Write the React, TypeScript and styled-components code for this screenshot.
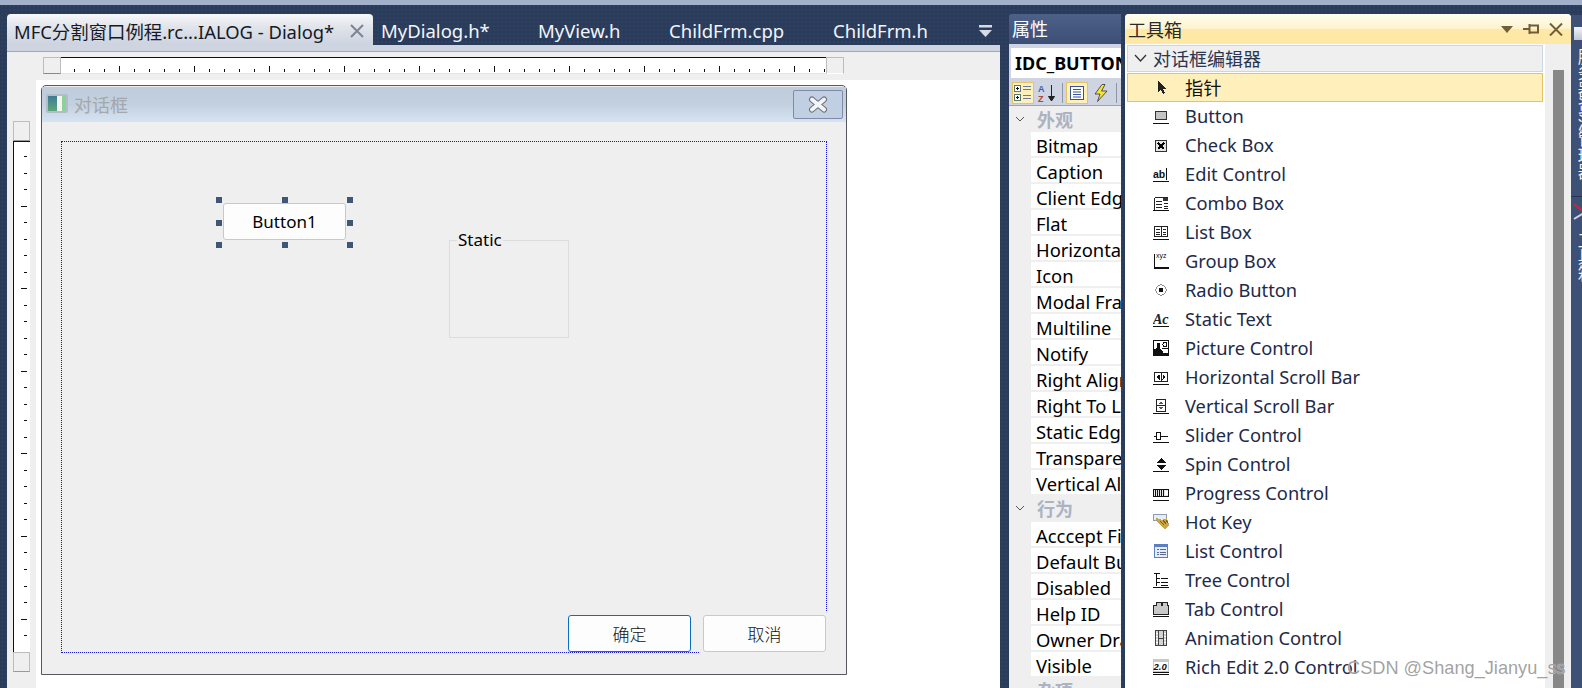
import React from 'react';
import styled, { createGlobalStyle } from 'styled-components';

const UI_FONT = '"Noto Sans", "Noto Sans CJK SC", sans-serif';

const GlobalStyle = createGlobalStyle`
  html, body {
    margin: 0;
    padding: 0;
    background: #2b3c5b;
  }
  * {
    box-sizing: border-box;
  }
`;

const tabs = [
  { label: 'MyDialog.h*', width: 157 },
  { label: 'MyView.h', width: 131 },
  { label: 'ChildFrm.cpp', width: 164 },
  { label: 'ChildFrm.h', width: 140 },
];

type PropRow = { header?: boolean; label: string };

const propRows: PropRow[] = [
  { header: true, label: '外观' },
  { label: 'Bitmap' },
  { label: 'Caption' },
  { label: 'Client Edge' },
  { label: 'Flat' },
  { label: 'Horizontal Alignment' },
  { label: 'Icon' },
  { label: 'Modal Frame' },
  { label: 'Multiline' },
  { label: 'Notify' },
  { label: 'Right Align Text' },
  { label: 'Right To Left Reading' },
  { label: 'Static Edge' },
  { label: 'Transparent' },
  { label: 'Vertical Alignment' },
  { header: true, label: '行为' },
  { label: 'Acccept Files' },
  { label: 'Default Button' },
  { label: 'Disabled' },
  { label: 'Help ID' },
  { label: 'Owner Draw' },
  { label: 'Visible' },
  { header: true, label: '杂项' },
];

const Line = () => <path d="M0 15.5H16" stroke="#111" fill="none" />;

const toolIcons: Record<string, React.ReactNode> = {
  pointer: <polygon points="5,1 5,13 8,10.5 10,15 12,14 10,9.5 13,9.5" fill="#222" />,
  button: (
    <>
      <rect x="2.5" y="3.5" width="11" height="8" fill="#c4c4c4" stroke="#333" />
      <Line />
    </>
  ),
  check: (
    <>
      <rect x="2.5" y="3.5" width="11" height="11" fill="#e4e4e4" stroke="#333" />
      <path d="M5 6l6 6M11 6l-6 6" stroke="#000" strokeWidth="2" />
    </>
  ),
  edit: (
    <>
      <text x="0" y="12" fontFamily="Liberation Sans" fontSize="10.5" fontWeight="700" fill="#111">ab</text>
      <path d="M13.5 2V14" stroke="#111" />
      <Line />
    </>
  ),
  combo: (
    <>
      <path d="M1.5 2.5H14.5M1.5 2.5V15M3 6.5H9M3 9.5H9M3 12.5H9" stroke="#222" fill="none" />
      <rect x="10" y="3" width="5" height="3" fill="#333" />
      <path d="M10.5 8.5H15M10.5 11.5H15M10.5 13.5H15" stroke="#222" />
      <Line />
    </>
  ),
  listbox: (
    <>
      <rect x="1.5" y="2.5" width="13" height="10" fill="none" stroke="#222" />
      <path d="M8 3V12M3 5.5H6.5M3 8.5H6.5M3 10.5H6.5M9.5 5.5H13M9.5 8.5H13M9.5 10.5H13" stroke="#222" />
      <Line />
    </>
  ),
  group: (
    <>
      <path d="M1.5 1V15" stroke="#111" fill="none" />
      <rect x="1" y="14" width="15" height="2" fill="#111" />
      <text x="3" y="5" fontFamily="Liberation Sans" fontSize="7" fill="#111">xyz</text>
    </>
  ),
  radio: (
    <>
      <circle cx="8" cy="8" r="5.2" fill="#fff" stroke="#8e8e8e" />
      <circle cx="8" cy="8" r="2.4" fill="#111" />
    </>
  ),
  statictext: (
    <>
      <text x="0" y="13" fontFamily="Liberation Serif" fontSize="14" fontStyle="italic" fontWeight="700" fill="#222">Ac</text>
      <Line />
    </>
  ),
  picture: (
    <>
      <rect x="0.5" y="0.5" width="15" height="15" fill="#fff" stroke="#111" />
      <path d="M1 15V9L4 8V3H7V9L10 11V13H15V15Z" fill="#111" />
      <circle cx="12" cy="4.5" r="2" fill="none" stroke="#111" />
      <path d="M9 8.5H15" stroke="#111" />
    </>
  ),
  hscroll: (
    <>
      <rect x="1.5" y="3.5" width="13" height="9" fill="none" stroke="#222" />
      <path d="M8 4V12" stroke="#222" />
      <path d="M6.5 5.5V10.5L3.5 8ZM9.5 5.5V10.5L12.5 8Z" fill="#111" />
      <Line />
    </>
  ),
  vscroll: (
    <>
      <rect x="3.5" y="1.5" width="9" height="12" fill="none" stroke="#222" />
      <path d="M4 7.5H12" stroke="#222" />
      <path d="M5.5 6L8 3L10.5 6ZM5.5 9L8 12L10.5 9Z" fill="#555" />
      <Line />
    </>
  ),
  slider: (
    <>
      <path d="M1 9.5H15" stroke="#111" strokeWidth="1.2" />
      <rect x="3.5" y="5.5" width="4" height="7" fill="#fff" stroke="#111" />
      <Line />
    </>
  ),
  spin: (
    <>
      <path d="M3 7L8 2L13 7ZM3 9L8 14L13 9Z" fill="#111" />
      <Line />
    </>
  ),
  progress: (
    <>
      <rect x="0.5" y="4.5" width="15" height="7" fill="#e6e6e6" stroke="#111" />
      <path d="M2 5V11M4 5V11M6 5V11M8 5V11M10 5V11" stroke="#111" strokeWidth="1" />
      <rect x="12" y="6" width="3" height="4" fill="#fff" />
      <Line />
    </>
  ),
  hotkey: (
    <>
      <rect x="0.5" y="0.5" width="13" height="6" fill="#e8edf5" stroke="#8d9bb5" />
      <path d="M3 4L9 6L14 4L16 11L12 15L8 12L4 8Z" fill="#c9a544" />
      <path d="M7 7L11 11M10 6L13 10M13 6L15 9" stroke="#7b6220" fill="none" />
    </>
  ),
  listctrl: (
    <>
      <rect x="1.5" y="1.5" width="13" height="13" fill="#e3ecf8" stroke="#5b7fc0" />
      <rect x="2" y="2" width="12" height="2" fill="#5b7fc0" />
      <path d="M4 6.5H5.5M7 6.5H13M4 9.5H5.5M7 9.5H13M4 11.5H5.5M7 11.5H13" stroke="#5a6a90" />
    </>
  ),
  tree: (
    <>
      <path d="M1 1.5H7M3.5 1.5V14" stroke="#111" fill="none" />
      <path d="M4 6.5H7M4 10.5H7" stroke="#111" />
      <path d="M8 6.5H15M8 10.5H15M8 13.5H15" stroke="#111" />
      <Line />
    </>
  ),
  tab: (
    <>
      <path d="M0.5 4.5H3.5V1.5H8.5V4.5H9.5V1.5H14.5V4.5H15.5V13.5H0.5Z" fill="#c8c8c8" stroke="#222" />
      <Line />
    </>
  ),
  animation: (
    <>
      <rect x="2.5" y="0.5" width="11" height="15" fill="#d4d4d4" stroke="#444" />
      <path d="M5.5 1V15M10.5 1V15M5.5 8.5H10.5" stroke="#444" />
      <path d="M3 3.5H5M3 6.5H5M3 9.5H5M3 12.5H5M11 3.5H13M11 6.5H13M11 9.5H13M11 12.5H13" stroke="#fff" />
    </>
  ),
  richedit: (
    <>
      <rect x="0" y="0" width="16" height="13" fill="#c8c8c8" />
      <rect x="1" y="3" width="14" height="9" fill="#fff" />
      <text x="0.5" y="11" fontFamily="Liberation Sans" fontSize="9.5" fontStyle="italic" fontWeight="700" fill="#111">2.0</text>
      <path d="M0 13.5H16" stroke="#111" />
      <Line />
    </>
  ),
};

const tools = [
  { icon: 'pointer', label: '指针', active: true },
  { icon: 'button', label: 'Button' },
  { icon: 'check', label: 'Check Box' },
  { icon: 'edit', label: 'Edit Control' },
  { icon: 'combo', label: 'Combo Box' },
  { icon: 'listbox', label: 'List Box' },
  { icon: 'group', label: 'Group Box' },
  { icon: 'radio', label: 'Radio Button' },
  { icon: 'statictext', label: 'Static Text' },
  { icon: 'picture', label: 'Picture Control' },
  { icon: 'hscroll', label: 'Horizontal Scroll Bar' },
  { icon: 'vscroll', label: 'Vertical Scroll Bar' },
  { icon: 'slider', label: 'Slider Control' },
  { icon: 'spin', label: 'Spin Control' },
  { icon: 'progress', label: 'Progress Control' },
  { icon: 'hotkey', label: 'Hot Key' },
  { icon: 'listctrl', label: 'List Control' },
  { icon: 'tree', label: 'Tree Control' },
  { icon: 'tab', label: 'Tab Control' },
  { icon: 'animation', label: 'Animation Control' },
  { icon: 'richedit', label: 'Rich Edit 2.0 Control' },
];

function HRulerTicks() {
  const ticks = Array.from({ length: 51 }, (_, i) => i);
  return (
    <RulerSvg width={764} height={16}>
      {ticks.map((i) => {
        const x = 13 + 15 * i;
        const major = i % 5 === 3;
        return <rect key={i} x={x} y={major ? 8 : 11} width={1} height={major ? 6 : 3} fill="#111" />;
      })}
    </RulerSvg>
  );
}

function VRulerTicks() {
  const ticks = Array.from({ length: 31 }, (_, i) => i);
  return (
    <RulerSvg width={15} height={511}>
      {ticks.map((i) => {
        const y = Math.round(14 + 16.52 * i);
        const major = i % 5 === 3;
        return <rect key={i} x={major ? 7 : 10} y={y} width={major ? 6 : 3} height={1} fill="#111" />;
      })}
    </RulerSvg>
  );
}

function App() {
  return (
    <>
      <GlobalStyle />
      <Styled.Page>
        <Styled.TopBand />
        <Styled.Main>
          <Styled.Editor>
            <Styled.TabStrip>
              <Styled.ActiveTab>
                <span>MFC分割窗口例程.rc...IALOG - Dialog*</span>
                <svg width="14" height="14" viewBox="0 0 14 14">
                  <path d="M1 1L13 13M13 1L1 13" stroke="#7d8494" strokeWidth="2" />
                </svg>
              </Styled.ActiveTab>
              {tabs.map((t) => (
                <Styled.Tab key={t.label} $width={t.width}>
                  {t.label}
                </Styled.Tab>
              ))}
              <Styled.TabMenu>
                <svg width="14" height="13" viewBox="0 0 14 13">
                  <path d="M0 0H13V2.5H0Z" fill="#d5dae4" />
                  <path d="M0 5H13L6.5 12Z" fill="#d5dae4" />
                </svg>
              </Styled.TabMenu>
            </Styled.TabStrip>
            <Styled.TabRail />
            <Styled.RulerBand>
              <Styled.RulerCorner $flat />
              <Styled.HRuler>
                <HRulerTicks />
              </Styled.HRuler>
              <Styled.RulerCorner />
            </Styled.RulerBand>
            <Styled.Workspace>
              <Styled.Gutter>
                <Styled.VCorner />
                <Styled.VRuler>
                  <VRulerTicks />
                </Styled.VRuler>
                <Styled.VCorner />
              </Styled.Gutter>
              <Styled.Canvas>
                <Styled.Dialog>
                  <Styled.DialogTitle>
                    <Styled.DialogIcon />
                    <Styled.DialogName>对话框</Styled.DialogName>
                    <Styled.DialogClose>
                      <svg width="20" height="17" viewBox="0 0 20 17">
                        <path d="M4 3.5L16 13.5M16 3.5L4 13.5" stroke="#6b7180" strokeWidth="6" strokeLinecap="round" />
                        <path d="M4 3.5L16 13.5M16 3.5L4 13.5" stroke="#f3f4f6" strokeWidth="4" strokeLinecap="round" />
                      </svg>
                    </Styled.DialogClose>
                  </Styled.DialogTitle>
                  <Styled.DialogClient>
                    <Styled.Guide />
                    <Styled.Button1>Button1</Styled.Button1>
                    {[
                      [175, 111],
                      [241, 111],
                      [306, 111],
                      [175, 134],
                      [306, 134],
                      [175, 156],
                      [241, 156],
                      [306, 156],
                    ].map(([x, y]) => (
                      <Styled.Handle key={`${x}-${y}`} $x={x} $y={y} />
                    ))}
                    <Styled.GroupBox>
                      <Styled.GroupLabel>Static</Styled.GroupLabel>
                    </Styled.GroupBox>
                    <Styled.OkButton>确定</Styled.OkButton>
                    <Styled.CancelButton>取消</Styled.CancelButton>
                  </Styled.DialogClient>
                </Styled.Dialog>
              </Styled.Canvas>
            </Styled.Workspace>
          </Styled.Editor>

          <Styled.Properties>
            <Styled.PropsTitle>属性</Styled.PropsTitle>
            <Styled.ObjectBar>
              <Styled.ObjectName>IDC_BUTTON1</Styled.ObjectName>
            </Styled.ObjectBar>
            <Styled.PropsToolbar>
              <Styled.ToolToggle $on>
                <svg width="18" height="18" viewBox="0 0 18 18">
                  <rect x="0.5" y="1.5" width="6" height="6" fill="#fff" stroke="#5a7a70" />
                  <rect x="0.5" y="10.5" width="6" height="6" fill="#fff" stroke="#5a7a70" />
                  <path d="M2 4.5H5M3.5 3V6M2 13.5H5M3.5 12V15" stroke="#111" />
                  <path d="M9 2.5H17M9 5.5H17M9 11.5H17M9 14.5H17" stroke="#6a7a9a" />
                </svg>
              </Styled.ToolToggle>
              <Styled.ToolPlain>
                <svg width="18" height="20" viewBox="0 0 18 20">
                  <text x="0" y="9" fontFamily="Liberation Sans" fontSize="9" fontWeight="700" fill="#3a5fb0">A</text>
                  <text x="0" y="19" fontFamily="Liberation Sans" fontSize="9" fontWeight="700" fill="#b04040">Z</text>
                  <path d="M13.5 2V17M10.5 13.5L13.5 18L16.5 13.5Z" stroke="#222" fill="#222" />
                </svg>
              </Styled.ToolPlain>
              <Styled.ToolSep />
              <Styled.ToolToggle $on>
                <svg width="16" height="16" viewBox="0 0 16 16">
                  <rect x="1.5" y="1.5" width="13" height="13" fill="#fff" stroke="#34519a" />
                  <path d="M4 4.5H12M4 7H12M4 9.5H12M4 12H12" stroke="#34519a" />
                </svg>
              </Styled.ToolToggle>
              <Styled.ToolPlain>
                <svg width="14" height="18" viewBox="0 0 14 18">
                  <path d="M8 0.5L1 10H6L3.5 17.5L13 7H7.5L11 0.5Z" fill="#f6e33a" stroke="#333" strokeWidth="0.8" />
                </svg>
              </Styled.ToolPlain>
              <Styled.ToolSep />
            </Styled.PropsToolbar>
            <Styled.PropsList>
              {propRows.map((row) =>
                row.header ? (
                  <Styled.PropHeader key={row.label}>
                    <svg width="10" height="6" viewBox="0 0 10 6">
                      <path d="M1 1L5 5L9 1" fill="none" stroke="#555" />
                    </svg>
                    <span>{row.label}</span>
                  </Styled.PropHeader>
                ) : (
                  <Styled.PropRow key={row.label}>{row.label}</Styled.PropRow>
                ),
              )}
            </Styled.PropsList>
          </Styled.Properties>

          <Styled.Toolbox>
            <Styled.ToolboxTitle>
              <span>工具箱</span>
              <Styled.TitleButtons>
                <svg width="12" height="7" viewBox="0 0 12 7">
                  <path d="M0 0H12L6 7Z" fill="#6f5f38" />
                </svg>
                <svg width="16" height="12" viewBox="0 0 16 12">
                  <path d="M0 6H6M6.5 1V11M6.5 2.5H15V9.5H6.5" fill="none" stroke="#6f5f38" strokeWidth="2" />
                </svg>
                <svg width="14" height="13" viewBox="0 0 14 13">
                  <path d="M1 0.5L13 12.5M13 0.5L1 12.5" stroke="#6f5f38" strokeWidth="2" />
                </svg>
              </Styled.TitleButtons>
            </Styled.ToolboxTitle>
            <Styled.ToolboxBody>
              <Styled.ToolList>
                <Styled.ToolGroup>
                  <svg width="13" height="8" viewBox="0 0 13 8">
                    <path d="M1 1L6.5 7L12 1" fill="none" stroke="#333" strokeWidth="1.3" />
                  </svg>
                  <span>对话框编辑器</span>
                </Styled.ToolGroup>
                {tools.map((t) => (
                  <Styled.ToolRow key={t.label} $active={t.active}>
                    <Styled.ToolIcon viewBox="0 0 16 16" width={16} height={16}>
                      {toolIcons[t.icon]}
                    </Styled.ToolIcon>
                    <span>{t.label}</span>
                  </Styled.ToolRow>
                ))}
              </Styled.ToolList>
              <Styled.ScrollTrack>
                <Styled.ScrollThumb />
              </Styled.ScrollTrack>
            </Styled.ToolboxBody>
          </Styled.Toolbox>

          <Styled.SideStrip>
            <Styled.SideIcon />
            <Styled.SideLabel>服务器资源管理器</Styled.SideLabel>
            <Styled.SideDivider />
            <Styled.SideMark>
              <svg width="11" height="18" viewBox="0 0 11 18">
                <path d="M1 1L11 9" stroke="#c02a3a" strokeWidth="2" />
                <path d="M1 16L11 10" stroke="#cfd6e5" strokeWidth="2" />
              </svg>
            </Styled.SideMark>
            <Styled.SideLabel>工具箱</Styled.SideLabel>
          </Styled.SideStrip>
        </Styled.Main>
        <Styled.Watermark>CSDN @Shang_Jianyu_ss</Styled.Watermark>
      </Styled.Page>
    </>
  );
}

export default App;

const Page = styled.div`
  position: relative;
  width: 1582px;
  height: 688px;
  overflow: hidden;
  display: flex;
  flex-direction: column;
  font-family: ${UI_FONT};
  background-color: #2b3c5b;
  background-image: radial-gradient(#33476a 0.6px, transparent 0.8px);
  background-size: 4px 4px;
`;

const TopBand = styled.div`
  height: 5px;
  flex: none;
  background: #a2b1c9;
`;

const Main = styled.div`
  flex: 1;
  min-height: 0;
  display: flex;
  padding: 9px 0 0 7px;
`;

const Editor = styled.div`
  width: 993px;
  flex: none;
  display: flex;
  flex-direction: column;
`;

const TabStrip = styled.div`
  height: 31px;
  flex: none;
  display: flex;
`;

const ActiveTab = styled.div`
  width: 366px;
  flex: none;
  display: flex;
  align-items: center;
  justify-content: space-between;
  padding: 2px 9px 0 7px;
  border-radius: 4px 4px 0 0;
  background: linear-gradient(#f6f7f9, #dfe3ea 45%, #cdd3df);
  color: #141a28;
  font-size: 18.4px;
  white-space: nowrap;
`;

const Tab = styled.div<{ $width: number }>`
  width: ${({ $width }) => $width}px;
  flex: none;
  display: flex;
  align-items: center;
  padding: 2px 0 0 8px;
  color: #f2f5fa;
  font-size: 18.5px;
  white-space: nowrap;
`;

const TabMenu = styled.div`
  display: flex;
  align-items: center;
  margin-left: 14px;
  padding-top: 4px;
`;

const TabRail = styled.div`
  height: 7px;
  flex: none;
  background: #ced4e0;
  border-bottom: 1px solid #a5a8ae;
`;

const RulerBand = styled.div`
  height: 28px;
  flex: none;
  display: flex;
  align-items: flex-start;
  padding: 5px 0 0 36px;
  background: #efefef;
`;

const RulerCorner = styled.div<{ $flat?: boolean }>`
  width: 18px;
  height: 17px;
  flex: none;
  background: #efefef;
  border: 1px solid #bdbdbd;
  border-bottom-color: ${({ $flat }) => ($flat ? '#888' : '#fff')};
`;

const HRuler = styled.div`
  width: 765px;
  height: 17px;
  flex: none;
  background: #fff;
  border-top: 1px solid #111;
  border-bottom: 1px solid #e4e4e4;
  overflow: hidden;
`;

const RulerSvg = styled.svg`
  display: block;
`;

const Workspace = styled.div`
  flex: 1;
  min-height: 0;
  display: flex;
`;

const Gutter = styled.div`
  width: 29px;
  flex: none;
  display: flex;
  flex-direction: column;
  align-items: flex-start;
  padding: 41px 0 0 6px;
  background: #efefef;
`;

const VCorner = styled.div`
  width: 17px;
  height: 20px;
  flex: none;
  background: #efefef;
  border: 1px solid #bdbdbd;
  border-bottom-color: #999;
`;

const VRuler = styled.div`
  width: 17px;
  height: 511px;
  flex: none;
  background: #fff;
  border-left: 1px solid #111;
  border-top: 1px solid #111;
  overflow: hidden;
`;

const Canvas = styled.div`
  flex: 1;
  min-width: 0;
  padding: 5px 0 0 5px;
  background: #fff;
`;

const Dialog = styled.div`
  width: 806px;
  height: 590px;
  display: flex;
  flex-direction: column;
  background: #efefef;
  border: 1.5px solid #565a60;
  border-radius: 5px 5px 0 0;
`;

const DialogTitle = styled.div`
  height: 35px;
  flex: none;
  display: flex;
  align-items: center;
  padding: 0 3px 0 4px;
  margin-top: 1px;
  background: linear-gradient(#bfccdb, #c3d0df 50%, #d6e3f2);
`;

const DialogIcon = styled.div`
  width: 22px;
  height: 19px;
  flex: none;
  border: 2px solid #b4bcc8;
  border-radius: 2px;
  margin-bottom: 2px;
  background:
    linear-gradient(90deg, transparent 0 50%, #f4f4f4 50% 80%, #8fcf9a 80%),
    linear-gradient(#3e7a96, #5ea77c);
`;

const DialogName = styled.div`
  margin-left: 6px;
  color: #a4a7ab;
  font-size: 18px;
  line-height: 24px;
`;

const DialogClose = styled.div`
  width: 50px;
  height: 29px;
  margin-left: auto;
  display: flex;
  align-items: center;
  justify-content: center;
  background: #c0cfe1;
  border: 1px solid #7f8ba8;
  border-radius: 2px;
`;

const DialogClient = styled.div`
  position: relative;
  flex: 1;
`;

const Guide = styled.div`
  position: absolute;
  left: 19px;
  top: 19px;
  width: 766px;
  height: 512px;
  border: 1px dotted #1010e0;
`;

const Handle = styled.div<{ $x: number; $y: number }>`
  position: absolute;
  left: ${({ $x }) => $x - 1}px;
  top: ${({ $y }) => $y - 36}px;
  width: 6px;
  height: 6px;
  background: #3f5675;
`;

const dialogButton = `
  position: absolute;
  display: flex;
  align-items: center;
  justify-content: center;
  background: #fdfdfd;
  border-radius: 3px;
  color: #111;
`;

const Button1 = styled.div`
  ${dialogButton}
  left: 181px;
  top: 81px;
  width: 123px;
  height: 37px;
  border: 1px solid #c8c8c8;
  color: #000;
  font-size: 17px;
`;

const GroupBox = styled.div`
  position: absolute;
  left: 407px;
  top: 118px;
  width: 120px;
  height: 98px;
  border: 1px solid #dcdcdc;
`;

const GroupLabel = styled.div`
  position: absolute;
  left: 7px;
  top: -11px;
  padding: 0 1px;
  background: #efefef;
  color: #000;
  font-size: 17px;
  line-height: 20px;
`;

const OkButton = styled.div`
  ${dialogButton}
  left: 526px;
  top: 493px;
  width: 123px;
  height: 37px;
  border: 1px solid #0a6fc2;
  font-size: 17px;
  font-weight: 300;
  padding-bottom: 1px;
`;

const CancelButton = styled.div`
  ${dialogButton}
  left: 661px;
  top: 493px;
  width: 123px;
  height: 37px;
  border: 1px solid #c9c9c9;
  font-size: 17px;
  font-weight: 300;
  padding-bottom: 1px;
  box-shadow: 0 0 0 4px #efefef;
`;

const Properties = styled.div`
  width: 112px;
  flex: none;
  margin-left: 9px;
  display: flex;
  flex-direction: column;
  overflow: hidden;
`;

const PropsTitle = styled.div`
  height: 30px;
  flex: none;
  padding-left: 3px;
  background: linear-gradient(#4d6088, #3c4f76);
  color: #fff;
  font-size: 18px;
  line-height: 30px;
  border-radius: 3px 0 0 0;
`;

const ObjectBar = styled.div`
  height: 36px;
  flex: none;
  padding: 4px 0 2px 2px;
  background: #ced4e2;
`;

const ObjectName = styled.div`
  height: 30px;
  padding-left: 4px;
  background: #fff;
  color: #000;
  font-size: 18px;
  font-weight: 700;
  line-height: 30px;
  white-space: nowrap;
`;

const PropsToolbar = styled.div`
  height: 26px;
  flex: none;
  display: flex;
  align-items: center;
  padding-left: 3px;
  background: #ced4e2;
  border-bottom: 1px solid #9aa3b4;
`;

const ToolToggle = styled.div<{ $on?: boolean }>`
  width: 22px;
  height: 22px;
  flex: none;
  display: flex;
  align-items: center;
  justify-content: center;
  background: ${({ $on }) => ($on ? '#ffefbb' : 'transparent')};
  border: 1px solid ${({ $on }) => ($on ? '#e5c365' : 'transparent')};
`;

const ToolPlain = styled.div`
  width: 26px;
  height: 22px;
  flex: none;
  display: flex;
  align-items: center;
  justify-content: center;
`;

const ToolSep = styled.div`
  width: 1px;
  height: 20px;
  flex: none;
  margin: 0 3px 0 2px;
  background: #8e97a9;
`;

const PropsList = styled.div`
  flex: 1;
  min-height: 0;
  padding-top: 2px;
  background: #efefef;
`;

const PropHeader = styled.div`
  height: 26px;
  display: flex;
  align-items: center;
  gap: 12px;
  padding: 0 0 2px 6px;
  color: #abb3c3;
  font-size: 18px;
  font-weight: 700;
  white-space: nowrap;
  &:first-child {
    height: 24px;
  }
`;

const PropRow = styled.div`
  height: 26px;
  margin-left: 22px;
  padding-left: 5px;
  background: #fff;
  border-bottom: 2px solid #efefef;
  color: #000;
  font-size: 18.4px;
  line-height: 27px;
  white-space: nowrap;
`;

const Toolbox = styled.div`
  width: 446px;
  flex: none;
  margin-left: 4px;
  display: flex;
  flex-direction: column;
  border-radius: 4px 4px 0 0;
  overflow: hidden;
  background: #efefef;
`;

const ToolboxTitle = styled.div`
  height: 30px;
  flex: none;
  display: flex;
  align-items: center;
  justify-content: space-between;
  padding: 0 8px 0 3px;
  background: linear-gradient(#fffdf0, #fff3cd 50%, #ffe8a6 50%, #ffe8a6);
  color: #2a2a2a;
  font-size: 18px;
`;

const TitleButtons = styled.div`
  display: flex;
  align-items: center;
  gap: 10px;
`;

const ToolboxBody = styled.div`
  flex: 1;
  min-height: 0;
  display: flex;
`;

const ToolList = styled.div`
  width: 420px;
  flex: none;
  padding: 1px 2px 0 2px;
  background: #fff;
`;

const ToolGroup = styled.div`
  height: 27px;
  display: flex;
  align-items: center;
  gap: 6px;
  padding: 0 0 2px 6px;
  background: #efefef;
  border: 1px solid #cdd5e5;
  color: #2a3550;
  font-size: 18px;
`;

const ToolRow = styled.div<{ $active?: boolean }>`
  height: 29px;
  display: flex;
  align-items: center;
  gap: 16px;
  padding: 0 0 2px 25px;
  margin-top: ${({ $active }) => ($active ? '1px' : '0')};
  background: ${({ $active }) => ($active ? '#ffefbb' : '#fff')};
  border: 1px solid ${({ $active }) => ($active ? '#e5c365' : 'transparent')};
  color: ${({ $active }) => ($active ? '#111' : '#1e2a4a')};
  font-size: 18.3px;
  white-space: nowrap;
`;

const ToolIcon = styled.svg`
  flex: none;
  shape-rendering: crispEdges;
`;

const ScrollTrack = styled.div`
  flex: 1;
  padding: 26px 7px 0 8px;
`;

const ScrollThumb = styled.div`
  height: 100%;
  background: #878787;
`;

const SideStrip = styled.div`
  flex: 1;
  min-width: 0;
  margin-top: 1px;
  overflow: hidden;
  display: flex;
  flex-direction: column;
  background: #3d5076;
`;

const SideIcon = styled.div`
  width: 8px;
  height: 13px;
  flex: none;
  margin: 12px 0 8px 3px;
  background: linear-gradient(#f4f4f4, #bcc6d6);
`;

const SideLabel = styled.div`
  writing-mode: vertical-rl;
  flex: none;
  margin-left: 6px;
  width: 17px;
  color: #eef2f8;
  font-size: 16.5px;
  line-height: 17px;
  white-space: nowrap;
`;

const SideDivider = styled.div`
  height: 1px;
  flex: none;
  margin-top: 16px;
  background: #27354f;
`;

const SideMark = styled.div`
  height: 20px;
  flex: none;
  margin: 6px 0 9px;
  padding-left: 2px;
`;

const Watermark = styled.div`
  position: absolute;
  left: 1347px;
  top: 655px;
  color: rgba(120, 120, 120, 0.7);
  font-family: 'Liberation Sans', sans-serif;
  font-size: 18.2px;
  line-height: 26px;
  text-shadow: 0 0 1px #fff;
  white-space: nowrap;
`;

const Styled = {
  Page,
  TopBand,
  Main,
  Editor,
  TabStrip,
  ActiveTab,
  Tab,
  TabMenu,
  TabRail,
  RulerBand,
  RulerCorner,
  HRuler,
  Workspace,
  Gutter,
  VCorner,
  VRuler,
  Canvas,
  Dialog,
  DialogTitle,
  DialogIcon,
  DialogName,
  DialogClose,
  DialogClient,
  Guide,
  Handle,
  Button1,
  GroupBox,
  GroupLabel,
  OkButton,
  CancelButton,
  Properties,
  PropsTitle,
  ObjectBar,
  ObjectName,
  PropsToolbar,
  ToolToggle,
  ToolPlain,
  ToolSep,
  PropsList,
  PropHeader,
  PropRow,
  Toolbox,
  ToolboxTitle,
  TitleButtons,
  ToolboxBody,
  ToolList,
  ToolGroup,
  ToolRow,
  ToolIcon,
  ScrollTrack,
  ScrollThumb,
  SideStrip,
  SideIcon,
  SideLabel,
  SideDivider,
  SideMark,
  Watermark,
};
